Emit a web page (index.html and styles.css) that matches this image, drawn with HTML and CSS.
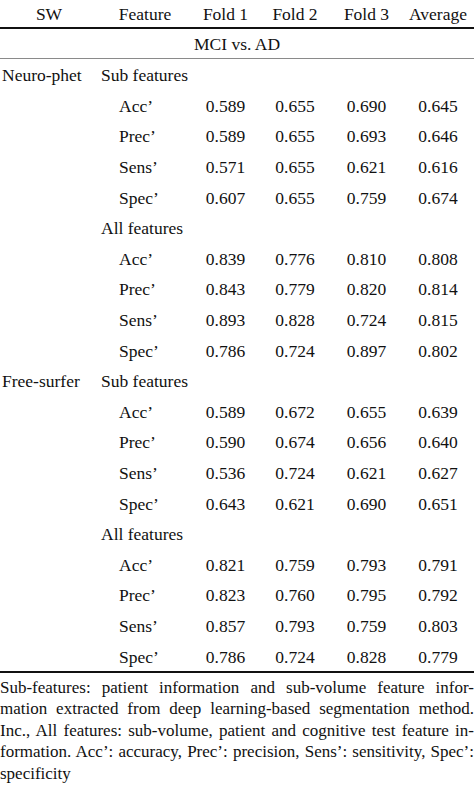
FILE: index.html
```html
<!DOCTYPE html>
<html>
<head>
<meta charset="utf-8">
<link rel="stylesheet" href="styles.css">
</head>
<body>
<div class="page">
<table class="results">
<colgroup>
<col class="c-sw"><col class="c-feat"><col class="c-f1"><col class="c-f2"><col class="c-f3"><col class="c-avg">
</colgroup>
<thead>
<tr class="head"><th>SW</th><th>Feature</th><th>Fold 1</th><th>Fold 2</th><th>Fold 3</th><th>Average</th></tr>
<tr class="group"><th colspan="6">MCI vs. AD</th></tr>
</thead>
<tbody>
<tr><td class="sw">Neuro-phet</td><td class="sub">Sub features</td><td></td><td></td><td></td><td></td></tr>
<tr><td></td><td class="metric">Acc’</td><td>0.589</td><td>0.655</td><td>0.690</td><td>0.645</td></tr>
<tr><td></td><td class="metric">Prec’</td><td>0.589</td><td>0.655</td><td>0.693</td><td>0.646</td></tr>
<tr><td></td><td class="metric">Sens’</td><td>0.571</td><td>0.655</td><td>0.621</td><td>0.616</td></tr>
<tr><td></td><td class="metric">Spec’</td><td>0.607</td><td>0.655</td><td>0.759</td><td>0.674</td></tr>
<tr><td></td><td class="sub">All features</td><td></td><td></td><td></td><td></td></tr>
<tr><td></td><td class="metric">Acc’</td><td>0.839</td><td>0.776</td><td>0.810</td><td>0.808</td></tr>
<tr><td></td><td class="metric">Prec’</td><td>0.843</td><td>0.779</td><td>0.820</td><td>0.814</td></tr>
<tr><td></td><td class="metric">Sens’</td><td>0.893</td><td>0.828</td><td>0.724</td><td>0.815</td></tr>
<tr><td></td><td class="metric">Spec’</td><td>0.786</td><td>0.724</td><td>0.897</td><td>0.802</td></tr>
<tr><td class="sw">Free-surfer</td><td class="sub">Sub features</td><td></td><td></td><td></td><td></td></tr>
<tr><td></td><td class="metric">Acc’</td><td>0.589</td><td>0.672</td><td>0.655</td><td>0.639</td></tr>
<tr><td></td><td class="metric">Prec’</td><td>0.590</td><td>0.674</td><td>0.656</td><td>0.640</td></tr>
<tr><td></td><td class="metric">Sens’</td><td>0.536</td><td>0.724</td><td>0.621</td><td>0.627</td></tr>
<tr><td></td><td class="metric">Spec’</td><td>0.643</td><td>0.621</td><td>0.690</td><td>0.651</td></tr>
<tr><td></td><td class="sub">All features</td><td></td><td></td><td></td><td></td></tr>
<tr><td></td><td class="metric">Acc’</td><td>0.821</td><td>0.759</td><td>0.793</td><td>0.791</td></tr>
<tr><td></td><td class="metric">Prec’</td><td>0.823</td><td>0.760</td><td>0.795</td><td>0.792</td></tr>
<tr><td></td><td class="metric">Sens’</td><td>0.857</td><td>0.793</td><td>0.759</td><td>0.803</td></tr>
<tr><td></td><td class="metric">Spec’</td><td>0.786</td><td>0.724</td><td>0.828</td><td>0.779</td></tr>
</tbody>
</table>
<div class="note">
<span class="line">Sub-features: patient information and sub-volume feature infor-</span>
<span class="line">mation extracted from deep learning-based segmentation method.</span>
<span class="line">Inc., All features: sub-volume, patient and cognitive test feature in-</span>
<span class="line">formation. Acc’: accuracy, Prec’: precision, Sens’: sensitivity, Spec’:</span>
<span class="line last">specificity</span>
</div>
</div>
</body>
</html>
```

FILE: styles.css
```css
html, body {
  margin: 0;
  padding: 0;
  background: #fff;
}
.page {
  width: 474px;
  font-family: "Liberation Serif", "Times New Roman", serif;
  font-size: 17.5px;
  color: #111;
}
.results {
  width: 474px;
  border-collapse: collapse;
  table-layout: fixed;
}
.c-sw { width: 98px; }
.c-feat { width: 94px; }
.c-f1 { width: 67px; }
.c-f2 { width: 72px; }
.c-f3 { width: 71px; }
.c-avg { width: 72px; }
.results th, .results td {
  padding: 0;
  font-weight: normal;
  text-align: center;
  vertical-align: middle;
  white-space: nowrap;
  line-height: 20px;
}
.head th {
  height: 27px;
  border-bottom: 2px solid #111;
}
.group th {
  height: 29px;
  border-bottom: 1.5px solid #8a8a8a;
}
.results tbody td {
  height: 28.6px;
  padding-top: 2px;
}
.results tbody tr:last-child td {
  border-bottom: 2px solid #111;
}
.results td.sw {
  text-align: left;
  padding-left: 2px;
}
.results td.sub {
  text-align: left;
  padding-left: 3px;
}
.results td.metric {
  text-align: left;
  padding-left: 21px;
}
.note {
  padding-top: 4px;
  font-size: 17px;
  line-height: 21.5px;
}
.line {
  display: block;
  text-align: justify;
  text-align-last: justify;
  white-space: nowrap;
}
.line.last {
  text-align-last: left;
}
```
